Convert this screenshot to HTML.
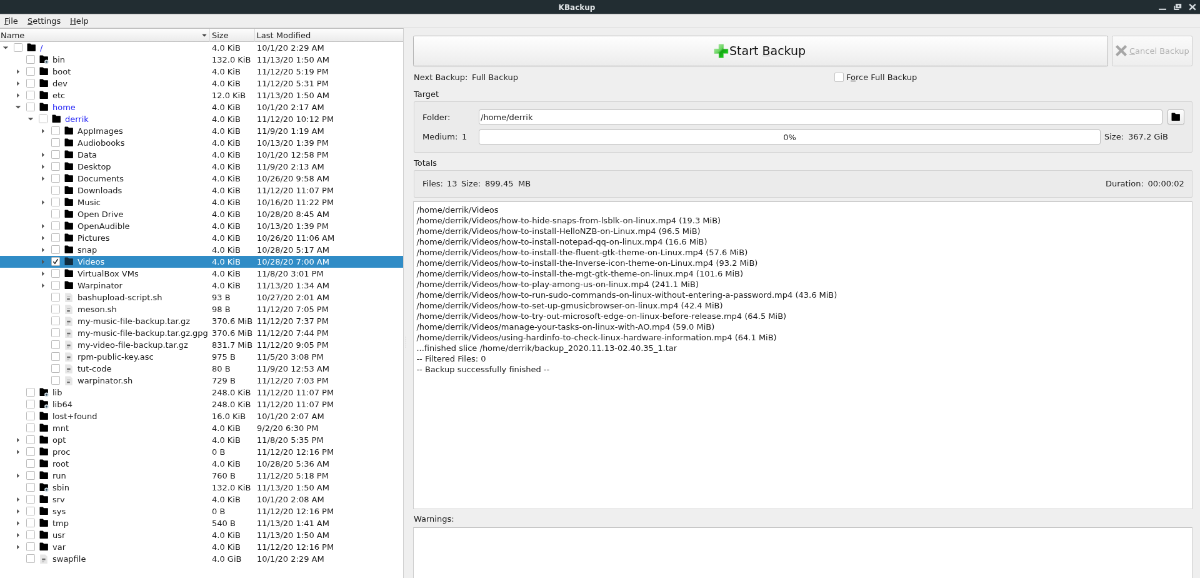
<!DOCTYPE html>
<html><head><meta charset="utf-8"><title>KBackup</title>
<style>
html,body{margin:0;padding:0;background:#efefef;overflow:hidden}
body{width:1200px;height:578px}
#w{position:absolute;left:0;top:0;width:1920px;height:924px;transform:scale(.625,.625541);transform-origin:0 0;will-change:transform;background:#efefef;font-family:"DejaVu Sans","Liberation Sans",sans-serif;font-size:13px;color:#1b1b1b;overflow:hidden}
#w *{box-sizing:border-box}
.abs{position:absolute}
#tb{left:0;top:0;width:1920px;height:22px;background:#222d32;border-bottom:0}
#tb2{left:0;top:22.400px;width:1920px;height:1.600px;background:#dadada}
#tt{left:0;width:1846px;top:0;height:21px;line-height:24px;text-align:center;color:#e0e4e6;font-weight:bold;font-size:12px}
#mb{left:0;top:21px;width:1920px;height:23px;border-bottom:1px solid #dcdcdc}
#mb span{position:absolute;top:0;line-height:25px}
u{text-decoration-thickness:1px;text-underline-offset:1px}
#tree{left:0;top:45px;width:646px;height:880px;background:#fff;border-top:1px solid #bdbdbd;border-right:1px solid #d0d0d0}
#hd{left:0;top:0;width:645px;height:21px;background:linear-gradient(#fdfdfd,#ebebeb);border-bottom:1px solid #c2c2c2}
#hd span{position:absolute;top:0;line-height:21px;height:21px}
.r{position:absolute;left:0;width:645px;height:19px;line-height:19px;white-space:nowrap}
.r span{position:absolute;top:0}
.r.sel{background:#308cc6;color:#fff}
.b{color:#2222f5}
.r .cb{position:absolute;top:2px;width:14px;height:14px;background:#fff;border:1px solid #bababa;border-radius:1.500px}
.ic{position:absolute;top:1px;width:16px;height:16px}
.ar{position:absolute;top:0;width:20px;height:19px}
.btn{border:1px solid #b4b4b4;border-radius:2.500px;background:linear-gradient(#fefefe,#ececec);box-shadow:0 1px 1px rgba(0,0,0,.05)}
.gb{background:#ebebeb;border:1px solid #d2d2d2;border-radius:2px}
.le{background:#fff;border:1px solid #bdbdbd;border-radius:3px}
.lb{white-space:nowrap;line-height:16px}
#log{left:661px;top:322px;width:1247px;height:492px;background:#fff;border:1px solid #cdcdcd;border-top-color:#bcbcbc;font-size:13px;line-height:17.020px;padding:4px 0 0 4.400px;white-space:pre}
#warn{left:661px;top:843px;width:1247px;height:90px;background:#fff;border:1px solid #cdcdcd;border-top-color:#bcbcbc}
</style></head><body><div id="w">
<div id="tb" class="abs"></div><div id="tb2" class="abs"></div><div id="tt" class="abs">KBackup</div>
<svg class="abs" style="left:1850px;top:0" width="70" height="21" viewBox="0 0 70 21"><g fill="#d3d9dd"><path d="M4 13.800h12v2.100h-12z"/><path fill-rule="evenodd" d="M31 6h9.200v7.200h-9.200zM34.400 8.600h2.600v2.100h-2.600z"/><path d="M28.400 9.400h1.800v4.600h6.400v2h-8.200z"/></g><path d="M53.200 6.800l9.600 8.800M62.800 6.800l-9.600 8.800" stroke="#d3d9dd" stroke-width="2.400" fill="none"/></svg>
<div id="mb" class="abs"><span style="left:7px"><u>F</u>ile</span><span style="left:44px"><u>S</u>ettings</span><span style="left:112px"><u>H</u>elp</span></div>
<div id="tree" class="abs">
<div id="hd" class="abs"><span style="left:1px">Name</span><svg class="abs" style="left:322px;top:7px" width="10" height="8" viewBox="0 0 10 8"><path d="M1.300 1.800h7.400l-3.700 3.900z" fill="#444"/></svg><span style="left:335px;border-left:1px solid #dadada;padding-left:3px">Size</span><span style="left:407px;border-left:1px solid #dadada;padding-left:2.500px">Last Modified</span></div>
<div class="r" style="top:21px"><svg class="ar" style="left:0px" viewBox="0 0 20 19"><path d="M4.800 7.400 h8.400 l-4.200 4.200z" fill="#505050"/></svg><span class="cb" style="left:22px"></span><svg class="ic" style="left:42px" viewBox="0 0 16 16"><path d="M1.500 2.200 q0-.7 .7-.7 h4 q.5 0 .9 .5 l1 1.300 h6.100 q.7 0 .7 .7 v9.300 q0 .7-.7 .7 h-12 q-.7 0-.7-.7z" fill="#000"/></svg><span style="left:64px" class="b">/</span><span style="left:339px">4.0 KiB</span><span style="left:411px">10/1/20 2:29 AM</span></div>
<div class="r" style="top:40px"><span class="cb" style="left:42px"></span><svg class="ic" style="left:62px" viewBox="0 0 16 16"><path d="M1.500 2.200 q0-.7 .7-.7 h4 q.5 0 .9 .5 l1 1.300 h6.100 q.7 0 .7 .7 v9.300 q0 .7-.7 .7 h-12 q-.7 0-.7-.7z" fill="#000"/><circle cx="12.400" cy="11.900" r="3.300" fill="#cfdbe2"/><circle cx="12.400" cy="11.900" r="1.500" fill="#2e4757"/></svg><span style="left:84px">bin</span><span style="left:339px">132.0 KiB</span><span style="left:411px">11/13/20 1:50 AM</span></div>
<div class="r" style="top:59px"><svg class="ar" style="left:20px" viewBox="0 0 20 19"><path d="M7.200 5.900 v7.400 l3.800-3.700z" fill="#505050"/></svg><span class="cb" style="left:42px"></span><svg class="ic" style="left:62px" viewBox="0 0 16 16"><path d="M1.500 2.200 q0-.7 .7-.7 h4 q.5 0 .9 .5 l1 1.300 h6.100 q.7 0 .7 .7 v9.300 q0 .7-.7 .7 h-12 q-.7 0-.7-.7z" fill="#000"/></svg><span style="left:84px">boot</span><span style="left:339px">4.0 KiB</span><span style="left:411px">11/12/20 5:19 PM</span></div>
<div class="r" style="top:78px"><svg class="ar" style="left:20px" viewBox="0 0 20 19"><path d="M7.200 5.900 v7.400 l3.800-3.700z" fill="#505050"/></svg><span class="cb" style="left:42px"></span><svg class="ic" style="left:62px" viewBox="0 0 16 16"><path d="M1.500 2.200 q0-.7 .7-.7 h4 q.5 0 .9 .5 l1 1.300 h6.100 q.7 0 .7 .7 v9.300 q0 .7-.7 .7 h-12 q-.7 0-.7-.7z" fill="#000"/></svg><span style="left:84px">dev</span><span style="left:339px">4.0 KiB</span><span style="left:411px">11/12/20 5:31 PM</span></div>
<div class="r" style="top:97px"><svg class="ar" style="left:20px" viewBox="0 0 20 19"><path d="M7.200 5.900 v7.400 l3.800-3.700z" fill="#505050"/></svg><span class="cb" style="left:42px"></span><svg class="ic" style="left:62px" viewBox="0 0 16 16"><path d="M1.500 2.200 q0-.7 .7-.7 h4 q.5 0 .9 .5 l1 1.300 h6.100 q.7 0 .7 .7 v9.300 q0 .7-.7 .7 h-12 q-.7 0-.7-.7z" fill="#000"/></svg><span style="left:84px">etc</span><span style="left:339px">12.0 KiB</span><span style="left:411px">11/13/20 1:50 AM</span></div>
<div class="r" style="top:116px"><svg class="ar" style="left:20px" viewBox="0 0 20 19"><path d="M4.800 7.400 h8.400 l-4.200 4.200z" fill="#505050"/></svg><span class="cb" style="left:42px"></span><svg class="ic" style="left:62px" viewBox="0 0 16 16"><path d="M1.500 2.200 q0-.7 .7-.7 h4 q.5 0 .9 .5 l1 1.300 h6.100 q.7 0 .7 .7 v9.300 q0 .7-.7 .7 h-12 q-.7 0-.7-.7z" fill="#000"/></svg><span style="left:84px" class="b">home</span><span style="left:339px">4.0 KiB</span><span style="left:411px">10/1/20 2:17 AM</span></div>
<div class="r" style="top:135px"><svg class="ar" style="left:40px" viewBox="0 0 20 19"><path d="M4.800 7.400 h8.400 l-4.200 4.200z" fill="#505050"/></svg><span class="cb" style="left:62px"></span><svg class="ic" style="left:82px" viewBox="0 0 16 16"><path d="M1.500 2.200 q0-.7 .7-.7 h4 q.5 0 .9 .5 l1 1.300 h6.100 q.7 0 .7 .7 v9.300 q0 .7-.7 .7 h-12 q-.7 0-.7-.7z" fill="#000"/></svg><span style="left:104px" class="b">derrik</span><span style="left:339px">4.0 KiB</span><span style="left:411px">11/12/20 10:12 PM</span></div>
<div class="r" style="top:154px"><svg class="ar" style="left:60px" viewBox="0 0 20 19"><path d="M7.200 5.900 v7.400 l3.800-3.700z" fill="#505050"/></svg><span class="cb" style="left:82px"></span><svg class="ic" style="left:102px" viewBox="0 0 16 16"><path d="M1.500 2.200 q0-.7 .7-.7 h4 q.5 0 .9 .5 l1 1.300 h6.100 q.7 0 .7 .7 v9.300 q0 .7-.7 .7 h-12 q-.7 0-.7-.7z" fill="#000"/></svg><span style="left:124px">AppImages</span><span style="left:339px">4.0 KiB</span><span style="left:411px">11/9/20 1:19 AM</span></div>
<div class="r" style="top:173px"><span class="cb" style="left:82px"></span><svg class="ic" style="left:102px" viewBox="0 0 16 16"><path d="M1.500 2.200 q0-.7 .7-.7 h4 q.5 0 .9 .5 l1 1.300 h6.100 q.7 0 .7 .7 v9.300 q0 .7-.7 .7 h-12 q-.7 0-.7-.7z" fill="#000"/></svg><span style="left:124px">Audiobooks</span><span style="left:339px">4.0 KiB</span><span style="left:411px">10/13/20 1:39 PM</span></div>
<div class="r" style="top:192px"><svg class="ar" style="left:60px" viewBox="0 0 20 19"><path d="M7.200 5.900 v7.400 l3.800-3.700z" fill="#505050"/></svg><span class="cb" style="left:82px"></span><svg class="ic" style="left:102px" viewBox="0 0 16 16"><path d="M1.500 2.200 q0-.7 .7-.7 h4 q.5 0 .9 .5 l1 1.300 h6.100 q.7 0 .7 .7 v9.300 q0 .7-.7 .7 h-12 q-.7 0-.7-.7z" fill="#000"/></svg><span style="left:124px">Data</span><span style="left:339px">4.0 KiB</span><span style="left:411px">10/1/20 12:58 PM</span></div>
<div class="r" style="top:211px"><svg class="ar" style="left:60px" viewBox="0 0 20 19"><path d="M7.200 5.900 v7.400 l3.800-3.700z" fill="#505050"/></svg><span class="cb" style="left:82px"></span><svg class="ic" style="left:102px" viewBox="0 0 16 16"><path d="M1.500 2.200 q0-.7 .7-.7 h4 q.5 0 .9 .5 l1 1.300 h6.100 q.7 0 .7 .7 v9.300 q0 .7-.7 .7 h-12 q-.7 0-.7-.7z" fill="#000"/></svg><span style="left:124px">Desktop</span><span style="left:339px">4.0 KiB</span><span style="left:411px">11/9/20 2:13 AM</span></div>
<div class="r" style="top:230px"><svg class="ar" style="left:60px" viewBox="0 0 20 19"><path d="M7.200 5.900 v7.400 l3.800-3.700z" fill="#505050"/></svg><span class="cb" style="left:82px"></span><svg class="ic" style="left:102px" viewBox="0 0 16 16"><path d="M1.500 2.200 q0-.7 .7-.7 h4 q.5 0 .9 .5 l1 1.300 h6.100 q.7 0 .7 .7 v9.300 q0 .7-.7 .7 h-12 q-.7 0-.7-.7z" fill="#000"/></svg><span style="left:124px">Documents</span><span style="left:339px">4.0 KiB</span><span style="left:411px">10/26/20 9:58 AM</span></div>
<div class="r" style="top:249px"><span class="cb" style="left:82px"></span><svg class="ic" style="left:102px" viewBox="0 0 16 16"><path d="M1.500 2.200 q0-.7 .7-.7 h4 q.5 0 .9 .5 l1 1.300 h6.100 q.7 0 .7 .7 v9.300 q0 .7-.7 .7 h-12 q-.7 0-.7-.7z" fill="#000"/></svg><span style="left:124px">Downloads</span><span style="left:339px">4.0 KiB</span><span style="left:411px">11/12/20 11:07 PM</span></div>
<div class="r" style="top:268px"><svg class="ar" style="left:60px" viewBox="0 0 20 19"><path d="M7.200 5.900 v7.400 l3.800-3.700z" fill="#505050"/></svg><span class="cb" style="left:82px"></span><svg class="ic" style="left:102px" viewBox="0 0 16 16"><path d="M1.500 2.200 q0-.7 .7-.7 h4 q.5 0 .9 .5 l1 1.300 h6.100 q.7 0 .7 .7 v9.300 q0 .7-.7 .7 h-12 q-.7 0-.7-.7z" fill="#000"/></svg><span style="left:124px">Music</span><span style="left:339px">4.0 KiB</span><span style="left:411px">10/16/20 11:22 PM</span></div>
<div class="r" style="top:287px"><span class="cb" style="left:82px"></span><svg class="ic" style="left:102px" viewBox="0 0 16 16"><path d="M1.500 2.200 q0-.7 .7-.7 h4 q.5 0 .9 .5 l1 1.300 h6.100 q.7 0 .7 .7 v9.300 q0 .7-.7 .7 h-12 q-.7 0-.7-.7z" fill="#000"/></svg><span style="left:124px">Open Drive</span><span style="left:339px">4.0 KiB</span><span style="left:411px">10/28/20 8:45 AM</span></div>
<div class="r" style="top:306px"><svg class="ar" style="left:60px" viewBox="0 0 20 19"><path d="M7.200 5.900 v7.400 l3.800-3.700z" fill="#505050"/></svg><span class="cb" style="left:82px"></span><svg class="ic" style="left:102px" viewBox="0 0 16 16"><path d="M1.500 2.200 q0-.7 .7-.7 h4 q.5 0 .9 .5 l1 1.300 h6.100 q.7 0 .7 .7 v9.300 q0 .7-.7 .7 h-12 q-.7 0-.7-.7z" fill="#000"/></svg><span style="left:124px">OpenAudible</span><span style="left:339px">4.0 KiB</span><span style="left:411px">10/13/20 1:39 PM</span></div>
<div class="r" style="top:325px"><svg class="ar" style="left:60px" viewBox="0 0 20 19"><path d="M7.200 5.900 v7.400 l3.800-3.700z" fill="#505050"/></svg><span class="cb" style="left:82px"></span><svg class="ic" style="left:102px" viewBox="0 0 16 16"><path d="M1.500 2.200 q0-.7 .7-.7 h4 q.5 0 .9 .5 l1 1.300 h6.100 q.7 0 .7 .7 v9.300 q0 .7-.7 .7 h-12 q-.7 0-.7-.7z" fill="#000"/></svg><span style="left:124px">Pictures</span><span style="left:339px">4.0 KiB</span><span style="left:411px">10/26/20 11:06 AM</span></div>
<div class="r" style="top:344px"><svg class="ar" style="left:60px" viewBox="0 0 20 19"><path d="M7.200 5.900 v7.400 l3.800-3.700z" fill="#505050"/></svg><span class="cb" style="left:82px"></span><svg class="ic" style="left:102px" viewBox="0 0 16 16"><path d="M1.500 2.200 q0-.7 .7-.7 h4 q.5 0 .9 .5 l1 1.300 h6.100 q.7 0 .7 .7 v9.300 q0 .7-.7 .7 h-12 q-.7 0-.7-.7z" fill="#000"/></svg><span style="left:124px">snap</span><span style="left:339px">4.0 KiB</span><span style="left:411px">10/28/20 5:17 AM</span></div>
<div class="r sel" style="top:363px"><svg class="ar" style="left:60px" viewBox="0 0 20 19"><path d="M7.200 5.900 v7.400 l3.800-3.700z" fill="#505050"/></svg><span class="cb" style="left:82px"><svg style="position:absolute;left:0;top:0" width="12" height="12" viewBox="0 0 12 12"><path d="M2.3 6.2l2.6 3 4.6-7" fill="none" stroke="#1a1a1a" stroke-width="1.5"/></svg></span><svg class="ic" style="left:102px" viewBox="0 0 16 16"><path d="M1.500 2.200 q0-.7 .7-.7 h4 q.5 0 .9 .5 l1 1.300 h6.100 q.7 0 .7 .7 v9.300 q0 .7-.7 .7 h-12 q-.7 0-.7-.7z" fill="#102c3f"/></svg><span style="left:124px">Videos</span><span style="left:339px">4.0 KiB</span><span style="left:411px">10/28/20 7:00 AM</span></div>
<div class="r" style="top:382px"><svg class="ar" style="left:60px" viewBox="0 0 20 19"><path d="M7.200 5.900 v7.400 l3.800-3.700z" fill="#505050"/></svg><span class="cb" style="left:82px"></span><svg class="ic" style="left:102px" viewBox="0 0 16 16"><path d="M1.500 2.200 q0-.7 .7-.7 h4 q.5 0 .9 .5 l1 1.300 h6.100 q.7 0 .7 .7 v9.300 q0 .7-.7 .7 h-12 q-.7 0-.7-.7z" fill="#000"/></svg><span style="left:124px">VirtualBox VMs</span><span style="left:339px">4.0 KiB</span><span style="left:411px">11/8/20 3:01 PM</span></div>
<div class="r" style="top:401px"><svg class="ar" style="left:60px" viewBox="0 0 20 19"><path d="M7.200 5.900 v7.400 l3.800-3.700z" fill="#505050"/></svg><span class="cb" style="left:82px"></span><svg class="ic" style="left:102px" viewBox="0 0 16 16"><path d="M1.500 2.200 q0-.7 .7-.7 h4 q.5 0 .9 .5 l1 1.300 h6.100 q.7 0 .7 .7 v9.300 q0 .7-.7 .7 h-12 q-.7 0-.7-.7z" fill="#000"/></svg><span style="left:124px">Warpinator</span><span style="left:339px">4.0 KiB</span><span style="left:411px">11/13/20 1:34 AM</span></div>
<div class="r" style="top:420px"><span class="cb" style="left:82px"></span><svg class="ic" style="left:102px" viewBox="0 0 16 16"><path d="M2.200 1.400h8.300l3.300 3.300v11.300h-11.600z" fill="#e6e6e6"/><path d="M5.200 6.700h5.400v1.300h-5.400z" fill="#b8b8b8"/><path d="M5.200 10h4.600v2.300h-4.600z" fill="#6a6a6a"/></svg><span style="left:124px">bashupload-script.sh</span><span style="left:339px">93 B</span><span style="left:411px">10/27/20 2:01 AM</span></div>
<div class="r" style="top:439px"><span class="cb" style="left:82px"></span><svg class="ic" style="left:102px" viewBox="0 0 16 16"><path d="M2.200 1.400h8.300l3.300 3.300v11.300h-11.600z" fill="#e6e6e6"/><path d="M5.200 6.700h5.400v1.300h-5.400z" fill="#b8b8b8"/><path d="M5.200 10h4.600v2.300h-4.600z" fill="#6a6a6a"/></svg><span style="left:124px">meson.sh</span><span style="left:339px">98 B</span><span style="left:411px">11/12/20 7:05 PM</span></div>
<div class="r" style="top:458px"><span class="cb" style="left:82px"></span><svg class="ic" style="left:102px" viewBox="0 0 16 16"><path d="M2.200 1.400h8.300l3.300 3.300v11.300h-11.600z" fill="#e6e6e6"/><path d="M5.200 7.800h5.400v2.600h-5.400z" fill="#6a6a6a"/><path d="M5.200 12.400h3.400v1.100h-3.400z" fill="#b0b0b0"/></svg><span style="left:124px">my-music-file-backup.tar.gz</span><span style="left:339px">370.6 MiB</span><span style="left:411px">11/12/20 7:37 PM</span></div>
<div class="r" style="top:477px"><span class="cb" style="left:82px"></span><svg class="ic" style="left:102px" viewBox="0 0 16 16"><path d="M2.200 1.400h8.300l3.300 3.300v11.300h-11.600z" fill="#e6e6e6"/><path d="M5.200 7.800h5.400v2.600h-5.400z" fill="#6a6a6a"/><path d="M5.200 12.400h3.400v1.100h-3.400z" fill="#b0b0b0"/></svg><span style="left:124px">my-music-file-backup.tar.gz.gpg</span><span style="left:339px">370.6 MiB</span><span style="left:411px">11/12/20 7:44 PM</span></div>
<div class="r" style="top:496px"><span class="cb" style="left:82px"></span><svg class="ic" style="left:102px" viewBox="0 0 16 16"><path d="M2.200 1.400h8.300l3.300 3.300v11.300h-11.600z" fill="#e6e6e6"/><path d="M5.200 7.800h5.400v2.600h-5.400z" fill="#6a6a6a"/><path d="M5.200 12.400h3.400v1.100h-3.400z" fill="#b0b0b0"/></svg><span style="left:124px">my-video-file-backup.tar.gz</span><span style="left:339px">831.7 MiB</span><span style="left:411px">11/12/20 9:05 PM</span></div>
<div class="r" style="top:515px"><span class="cb" style="left:82px"></span><svg class="ic" style="left:102px" viewBox="0 0 16 16"><path d="M2.200 1.400h8.300l3.300 3.300v11.300h-11.600z" fill="#e6e6e6"/><path d="M5.200 7.800h5.400v2.600h-5.400z" fill="#6a6a6a"/><path d="M5.200 12.400h3.400v1.100h-3.400z" fill="#b0b0b0"/></svg><span style="left:124px">rpm-public-key.asc</span><span style="left:339px">975 B</span><span style="left:411px">11/5/20 3:08 PM</span></div>
<div class="r" style="top:534px"><span class="cb" style="left:82px"></span><svg class="ic" style="left:102px" viewBox="0 0 16 16"><path d="M2.200 1.400h8.300l3.300 3.300v11.300h-11.600z" fill="#e6e6e6"/><path d="M5.200 7.800h5.400v2.600h-5.400z" fill="#6a6a6a"/><path d="M5.200 12.400h3.400v1.100h-3.400z" fill="#b0b0b0"/></svg><span style="left:124px">tut-code</span><span style="left:339px">80 B</span><span style="left:411px">11/9/20 12:53 AM</span></div>
<div class="r" style="top:553px"><span class="cb" style="left:82px"></span><svg class="ic" style="left:102px" viewBox="0 0 16 16"><path d="M2.200 1.400h8.300l3.300 3.300v11.300h-11.600z" fill="#e6e6e6"/><path d="M5.200 6.700h5.400v1.300h-5.400z" fill="#b8b8b8"/><path d="M5.200 10h4.600v2.300h-4.600z" fill="#6a6a6a"/></svg><span style="left:124px">warpinator.sh</span><span style="left:339px">729 B</span><span style="left:411px">11/12/20 7:03 PM</span></div>
<div class="r" style="top:572px"><span class="cb" style="left:42px"></span><svg class="ic" style="left:62px" viewBox="0 0 16 16"><path d="M1.500 2.200 q0-.7 .7-.7 h4 q.5 0 .9 .5 l1 1.300 h6.100 q.7 0 .7 .7 v9.300 q0 .7-.7 .7 h-12 q-.7 0-.7-.7z" fill="#000"/><circle cx="12.400" cy="11.900" r="3.300" fill="#cfdbe2"/><circle cx="12.400" cy="11.900" r="1.500" fill="#2e4757"/></svg><span style="left:84px">lib</span><span style="left:339px">248.0 KiB</span><span style="left:411px">11/12/20 11:07 PM</span></div>
<div class="r" style="top:591px"><span class="cb" style="left:42px"></span><svg class="ic" style="left:62px" viewBox="0 0 16 16"><path d="M1.500 2.200 q0-.7 .7-.7 h4 q.5 0 .9 .5 l1 1.300 h6.100 q.7 0 .7 .7 v9.300 q0 .7-.7 .7 h-12 q-.7 0-.7-.7z" fill="#000"/><circle cx="12.400" cy="11.900" r="3.300" fill="#cfdbe2"/><circle cx="12.400" cy="11.900" r="1.500" fill="#2e4757"/></svg><span style="left:84px">lib64</span><span style="left:339px">248.0 KiB</span><span style="left:411px">11/12/20 11:07 PM</span></div>
<div class="r" style="top:610px"><span class="cb" style="left:42px"></span><svg class="ic" style="left:62px" viewBox="0 0 16 16"><path d="M1.500 2.200 q0-.7 .7-.7 h4 q.5 0 .9 .5 l1 1.300 h6.100 q.7 0 .7 .7 v9.300 q0 .7-.7 .7 h-12 q-.7 0-.7-.7z" fill="#000"/></svg><span style="left:84px">lost+found</span><span style="left:339px">16.0 KiB</span><span style="left:411px">10/1/20 2:07 AM</span></div>
<div class="r" style="top:629px"><span class="cb" style="left:42px"></span><svg class="ic" style="left:62px" viewBox="0 0 16 16"><path d="M1.500 2.200 q0-.7 .7-.7 h4 q.5 0 .9 .5 l1 1.300 h6.100 q.7 0 .7 .7 v9.300 q0 .7-.7 .7 h-12 q-.7 0-.7-.7z" fill="#000"/></svg><span style="left:84px">mnt</span><span style="left:339px">4.0 KiB</span><span style="left:411px">9/2/20 6:30 PM</span></div>
<div class="r" style="top:648px"><svg class="ar" style="left:20px" viewBox="0 0 20 19"><path d="M7.200 5.900 v7.400 l3.800-3.700z" fill="#505050"/></svg><span class="cb" style="left:42px"></span><svg class="ic" style="left:62px" viewBox="0 0 16 16"><path d="M1.500 2.200 q0-.7 .7-.7 h4 q.5 0 .9 .5 l1 1.300 h6.100 q.7 0 .7 .7 v9.300 q0 .7-.7 .7 h-12 q-.7 0-.7-.7z" fill="#000"/></svg><span style="left:84px">opt</span><span style="left:339px">4.0 KiB</span><span style="left:411px">11/8/20 5:35 PM</span></div>
<div class="r" style="top:667px"><svg class="ar" style="left:20px" viewBox="0 0 20 19"><path d="M7.200 5.900 v7.400 l3.800-3.700z" fill="#505050"/></svg><span class="cb" style="left:42px"></span><svg class="ic" style="left:62px" viewBox="0 0 16 16"><path d="M1.500 2.200 q0-.7 .7-.7 h4 q.5 0 .9 .5 l1 1.300 h6.100 q.7 0 .7 .7 v9.300 q0 .7-.7 .7 h-12 q-.7 0-.7-.7z" fill="#000"/></svg><span style="left:84px">proc</span><span style="left:339px">0 B</span><span style="left:411px">11/12/20 12:16 PM</span></div>
<div class="r" style="top:686px"><span class="cb" style="left:42px"></span><svg class="ic" style="left:62px" viewBox="0 0 16 16"><path d="M1.500 2.200 q0-.7 .7-.7 h4 q.5 0 .9 .5 l1 1.300 h6.100 q.7 0 .7 .7 v9.300 q0 .7-.7 .7 h-12 q-.7 0-.7-.7z" fill="#000"/></svg><span style="left:84px">root</span><span style="left:339px">4.0 KiB</span><span style="left:411px">10/28/20 5:36 AM</span></div>
<div class="r" style="top:705px"><svg class="ar" style="left:20px" viewBox="0 0 20 19"><path d="M7.200 5.900 v7.400 l3.800-3.700z" fill="#505050"/></svg><span class="cb" style="left:42px"></span><svg class="ic" style="left:62px" viewBox="0 0 16 16"><path d="M1.500 2.200 q0-.7 .7-.7 h4 q.5 0 .9 .5 l1 1.300 h6.100 q.7 0 .7 .7 v9.300 q0 .7-.7 .7 h-12 q-.7 0-.7-.7z" fill="#000"/></svg><span style="left:84px">run</span><span style="left:339px">760 B</span><span style="left:411px">11/12/20 5:18 PM</span></div>
<div class="r" style="top:724px"><span class="cb" style="left:42px"></span><svg class="ic" style="left:62px" viewBox="0 0 16 16"><path d="M1.500 2.200 q0-.7 .7-.7 h4 q.5 0 .9 .5 l1 1.300 h6.100 q.7 0 .7 .7 v9.300 q0 .7-.7 .7 h-12 q-.7 0-.7-.7z" fill="#000"/><circle cx="12.400" cy="11.900" r="3.300" fill="#cfdbe2"/><circle cx="12.400" cy="11.900" r="1.500" fill="#2e4757"/></svg><span style="left:84px">sbin</span><span style="left:339px">132.0 KiB</span><span style="left:411px">11/13/20 1:50 AM</span></div>
<div class="r" style="top:743px"><svg class="ar" style="left:20px" viewBox="0 0 20 19"><path d="M7.200 5.900 v7.400 l3.800-3.700z" fill="#505050"/></svg><span class="cb" style="left:42px"></span><svg class="ic" style="left:62px" viewBox="0 0 16 16"><path d="M1.500 2.200 q0-.7 .7-.7 h4 q.5 0 .9 .5 l1 1.300 h6.100 q.7 0 .7 .7 v9.300 q0 .7-.7 .7 h-12 q-.7 0-.7-.7z" fill="#000"/></svg><span style="left:84px">srv</span><span style="left:339px">4.0 KiB</span><span style="left:411px">10/1/20 2:08 AM</span></div>
<div class="r" style="top:762px"><svg class="ar" style="left:20px" viewBox="0 0 20 19"><path d="M7.200 5.900 v7.400 l3.800-3.700z" fill="#505050"/></svg><span class="cb" style="left:42px"></span><svg class="ic" style="left:62px" viewBox="0 0 16 16"><path d="M1.500 2.200 q0-.7 .7-.7 h4 q.5 0 .9 .5 l1 1.300 h6.100 q.7 0 .7 .7 v9.300 q0 .7-.7 .7 h-12 q-.7 0-.7-.7z" fill="#000"/></svg><span style="left:84px">sys</span><span style="left:339px">0 B</span><span style="left:411px">11/12/20 12:16 PM</span></div>
<div class="r" style="top:781px"><svg class="ar" style="left:20px" viewBox="0 0 20 19"><path d="M7.200 5.900 v7.400 l3.800-3.700z" fill="#505050"/></svg><span class="cb" style="left:42px"></span><svg class="ic" style="left:62px" viewBox="0 0 16 16"><path d="M1.500 2.200 q0-.7 .7-.7 h4 q.5 0 .9 .5 l1 1.300 h6.100 q.7 0 .7 .7 v9.300 q0 .7-.7 .7 h-12 q-.7 0-.7-.7z" fill="#000"/></svg><span style="left:84px">tmp</span><span style="left:339px">540 B</span><span style="left:411px">11/13/20 1:41 AM</span></div>
<div class="r" style="top:800px"><svg class="ar" style="left:20px" viewBox="0 0 20 19"><path d="M7.200 5.900 v7.400 l3.800-3.700z" fill="#505050"/></svg><span class="cb" style="left:42px"></span><svg class="ic" style="left:62px" viewBox="0 0 16 16"><path d="M1.500 2.200 q0-.7 .7-.7 h4 q.5 0 .9 .5 l1 1.300 h6.100 q.7 0 .7 .7 v9.300 q0 .7-.7 .7 h-12 q-.7 0-.7-.7z" fill="#000"/></svg><span style="left:84px">usr</span><span style="left:339px">4.0 KiB</span><span style="left:411px">11/13/20 1:50 AM</span></div>
<div class="r" style="top:819px"><svg class="ar" style="left:20px" viewBox="0 0 20 19"><path d="M7.200 5.900 v7.400 l3.800-3.700z" fill="#505050"/></svg><span class="cb" style="left:42px"></span><svg class="ic" style="left:62px" viewBox="0 0 16 16"><path d="M1.500 2.200 q0-.7 .7-.7 h4 q.5 0 .9 .5 l1 1.300 h6.100 q.7 0 .7 .7 v9.300 q0 .7-.7 .7 h-12 q-.7 0-.7-.7z" fill="#000"/></svg><span style="left:84px">var</span><span style="left:339px">4.0 KiB</span><span style="left:411px">11/12/20 12:16 PM</span></div>
<div class="r" style="top:838px"><span class="cb" style="left:42px"></span><svg class="ic" style="left:62px" viewBox="0 0 16 16"><path d="M2.200 1.400h8.300l3.300 3.300v11.300h-11.600z" fill="#e6e6e6"/><path d="M5.200 7.800h5.400v2.600h-5.400z" fill="#6a6a6a"/><path d="M5.200 12.400h3.400v1.100h-3.400z" fill="#b0b0b0"/></svg><span style="left:84px">swapfile</span><span style="left:339px">4.0 GiB</span><span style="left:411px">10/1/20 2:29 AM</span></div>
</div>
<svg class="abs" style="left:647.500px;top:538px" width="2" height="19" viewBox="0 0 2 19" fill="#d9d9d9"><circle cx="1" cy="1.0" r=".8"/><circle cx="1" cy="4.2" r=".8"/><circle cx="1" cy="7.4" r=".8"/><circle cx="1" cy="10.6" r=".8"/><circle cx="1" cy="13.8" r=".8"/><circle cx="1" cy="17.0" r=".8"/></svg>
<div class="abs btn" style="left:661px;top:57px;width:1112px;height:49px"></div>
<svg class="abs" style="left:1142px;top:69.800px" width="24" height="23" viewBox="0 0 24 23"><defs><linearGradient id="g" x1="0" y1="0" x2="1" y2="1"><stop offset="0" stop-color="#c0f0ba"/><stop offset=".42" stop-color="#68d45f"/><stop offset=".52" stop-color="#13a313"/><stop offset=".75" stop-color="#18c418"/><stop offset="1" stop-color="#2bd32b"/></linearGradient></defs><path d="M8.200 1h7.400v7.300h7.400v7.200h-7.400v7h-7.400v-7h-7.200v-7.200h7.200z" fill="url(#g)" stroke="#7fd578" stroke-opacity=".7" stroke-width=".9" stroke-linejoin="round"/></svg>
<div class="abs lb" style="left:1167px;top:68.600px;font-size:19px;line-height:24px;color:#111">Start <u style="text-decoration-color:#aaa">B</u>ackup</div>
<div class="abs btn" style="left:1779px;top:57px;width:129px;height:49px;border-color:#cdcdcd;background:linear-gradient(#fafafa,#eeeeee);box-shadow:none"></div>
<svg class="abs" style="left:1783.500px;top:70.500px" width="20" height="20" viewBox="0 0 20 20"><path d="M2.400 2.400l15.200 15.200M17.600 2.400l-15.200 15.200" stroke="#a6a6a6" stroke-width="4.200" fill="none"/></svg>
<div class="abs lb" style="left:1807px;top:74px;color:#b2b2b2"><u>C</u>ancel Backup</div>
<div class="abs lb" style="left:662px;top:116px">Next Backup:</div><div class="abs lb" style="left:755px;top:116px">Full Backup</div>
<div class="abs" style="left:1335px;top:116px;width:15px;height:14.500px;background:#fff;border:1px solid #c4c4c4;border-radius:2px"></div>
<div class="abs lb" style="left:1354px;top:116px">F<u>o</u>rce Full Backup</div>
<div class="abs lb" style="left:662px;top:142.500px">Target</div>
<div class="abs gb" style="left:662px;top:162px;width:1246px;height:82px"></div>
<div class="abs lb" style="left:676px;top:179.500px">Folder:</div>
<div class="abs le lb" style="left:766px;top:175px;width:1094px;height:24px;padding:4px 0 0 2px">/home/derrik</div>
<div class="abs btn" style="left:1868px;top:175px;width:27px;height:24px"></div>
<svg class="abs" width="16" height="16" style="left:1873px;top:179px" viewBox="0 0 16 16"><path d="M1.500 2.200 q0-.7 .7-.7 h4 q.5 0 .9 .5 l1 1.300 h6.100 q.7 0 .7 .7 v9.300 q0 .7-.7 .7 h-12 q-.7 0-.7-.7z" fill="#000"/></svg>
<div class="abs lb" style="left:676px;top:210.500px">Medium:</div><div class="abs lb" style="left:739px;top:210.500px">1</div>
<div class="abs le lb" style="left:766px;top:207px;width:995px;height:24px;padding-top:3.500px;text-align:center">0%</div>
<div class="abs lb" style="left:1767px;top:210.500px">Size:</div><div class="abs lb" style="left:1805px;top:210.500px">367.2 GiB</div>
<div class="abs lb" style="left:662px;top:253px">Totals</div>
<div class="abs gb" style="left:662px;top:272.400px;width:1246px;height:43.600px"></div>
<div class="abs lb" style="left:676px;top:285.500px">Files:</div><div class="abs lb" style="left:715px;top:285.500px">13</div><div class="abs lb" style="left:738px;top:285.500px">Size:</div><div class="abs lb" style="left:776px;top:285.500px">899.45</div><div class="abs lb" style="left:829px;top:285.500px">MB</div>
<div class="abs lb" style="left:1769px;top:285.500px">Duration:</div><div class="abs lb" style="left:1836.500px;top:285.500px">00:00:02</div>
<div id="log" class="abs">/home/derrik/Videos
/home/derrik/Videos/how-to-hide-snaps-from-lsblk-on-linux.mp4 (19.3 MiB)
/home/derrik/Videos/how-to-install-HelloNZB-on-Linux.mp4 (96.5 MiB)
/home/derrik/Videos/how-to-install-notepad-qq-on-linux.mp4 (16.6 MiB)
/home/derrik/Videos/how-to-install-the-fluent-gtk-theme-on-Linux.mp4 (57.6 MiB)
/home/derrik/Videos/how-to-install-the-Inverse-icon-theme-on-Linux.mp4 (93.2 MiB)
/home/derrik/Videos/how-to-install-the-mgt-gtk-theme-on-linux.mp4 (101.6 MiB)
/home/derrik/Videos/how-to-play-among-us-on-linux.mp4 (241.1 MiB)
/home/derrik/Videos/how-to-run-sudo-commands-on-linux-without-entering-a-password.mp4 (43.6 MiB)
/home/derrik/Videos/how-to-set-up-gmusicbrowser-on-linux.mp4 (42.4 MiB)
/home/derrik/Videos/how-to-try-out-microsoft-edge-on-linux-before-release.mp4 (64.5 MiB)
/home/derrik/Videos/manage-your-tasks-on-linux-with-AO.mp4 (59.0 MiB)
/home/derrik/Videos/using-hardinfo-to-check-linux-hardware-information.mp4 (64.1 MiB)
...finished slice /home/derrik/backup_2020.11.13-02.40.35_1.tar
-- Filtered Files: 0
-- Backup successfully finished --</div>
<div class="abs lb" style="left:662px;top:821.500px">Warnings:</div>
<div id="warn" class="abs"></div>
</div></body></html>
